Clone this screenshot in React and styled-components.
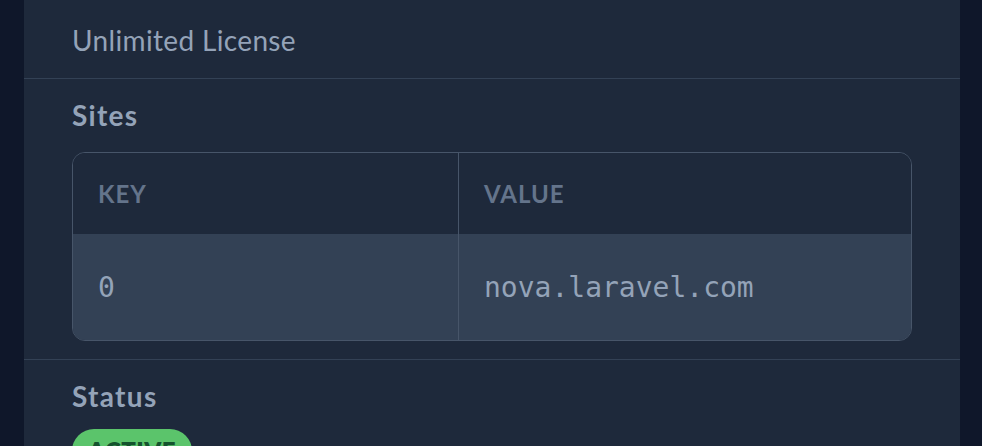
import styled, { createGlobalStyle } from 'styled-components'

const GlobalStyle = createGlobalStyle`
  html, body {
    margin: 0;
    padding: 0;
    background: #0f172a;
    height: 100%;
    overflow: hidden;
  }
`

const sites = [{ key: '0', value: 'nova.laravel.com' }]

function App() {
  return (
    <>
      <GlobalStyle />
      <Page>
        <Panel>
          <Field>
            <Value>Unlimited License</Value>
          </Field>
          <Field>
            <Label>Sites</Label>
            <Table>
              <HeadCell>Key</HeadCell>
              <HeadCell $last>Value</HeadCell>
              {sites.map(site => (
                <Row key={site.key}>
                  <BodyCell>{site.key}</BodyCell>
                  <BodyCell $last>{site.value}</BodyCell>
                </Row>
              ))}
            </Table>
          </Field>
          <Field $last>
            <Label>Status</Label>
            <Badge>Active</Badge>
          </Field>
        </Panel>
      </Page>
    </>
  )
}

export default App

const Page = styled.div`
  display: flex;
  padding: 0 22px 0 24px;
  height: 446px;
  overflow: hidden;
  font-family: Lato, "Noto Sans", sans-serif;
`

const Panel = styled.div`
  flex: 1;
  background: #1e293b;
  display: flex;
  flex-direction: column;
  padding-top: 4px;
`

const Field = styled.div`
  display: flex;
  flex-direction: column;
  gap: ${p => (p.$last ? '13px' : '17px')};
  padding: 16px 48px 18px;
  border-bottom: ${p => (p.$last ? 'none' : '1px solid #334155')};
`

const Label = styled.div`
  font-size: 28px;
  line-height: 40px;
  font-weight: 700;
  letter-spacing: 1.3px;
  color: #94a3b8;
`

const Value = styled.div`
  font-size: 28px;
  line-height: 40px;
  letter-spacing: 0.35px;
  color: #94a3b8;
`

const Table = styled.div`
  display: grid;
  grid-template-columns: 386px 1fr;
  border: 1px solid #475569;
  border-radius: 13px;
  overflow: hidden;
`

const Row = styled.div`
  display: contents;
`

const HeadCell = styled.div`
  height: 81px;
  display: flex;
  align-items: center;
  padding: 0 25px;
  background: #1e293b;
  color: #64748b;
  font-size: 24px;
  font-weight: 700;
  letter-spacing: 1px;
  text-transform: uppercase;
  border-right: ${p => (p.$last ? 'none' : '1px solid #475569')};
`

const BodyCell = styled.div`
  height: 106px;
  display: flex;
  align-items: center;
  padding: 0 25px;
  background: #334155;
  color: #94a3b8;
  font-family: "DejaVu Sans Mono", monospace;
  font-size: 28px;
  border-right: ${p => (p.$last ? 'none' : '1px solid #475569')};
`

const Badge = styled.span`
  align-self: flex-start;
  padding: 6px 16px;
  border-radius: 999px;
  background: #5bc46b;
  color: #14532d;
  font-size: 24px;
  line-height: 32px;
  font-weight: 800;
  letter-spacing: 0.5px;
  text-transform: uppercase;
`
